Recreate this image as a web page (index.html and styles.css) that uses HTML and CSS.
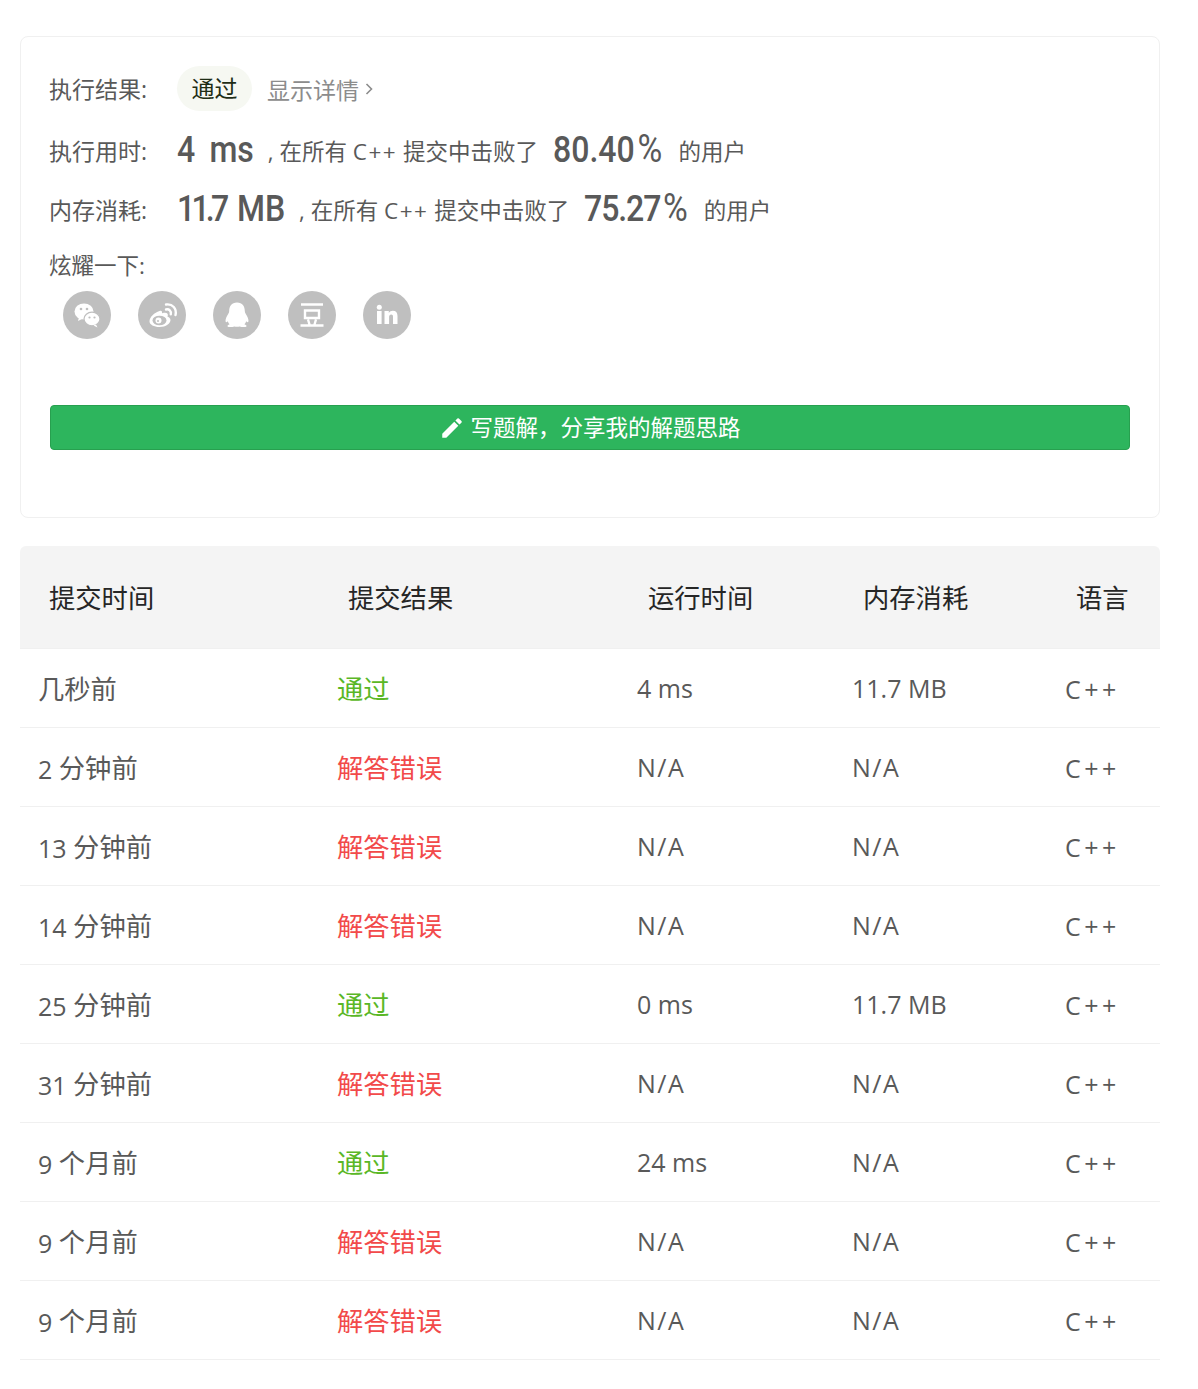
FILE: index.html
```html
<!DOCTYPE html>
<html lang="zh-CN">
<head>
<meta charset="utf-8">
<title>提交结果</title>
<link rel="stylesheet" href="styles.css">
</head>
<body>
<main class="page">
  <section class="card">
    <div class="row row-result">
      <span class="label">执行结果:</span>
      <span class="pill">通过</span>
      <a class="detail">显示详情</a>
      <svg class="chev" width="8" height="12" viewBox="0 0 8 12"><path d="M1.500 1 6.500 6l-5 5" fill="none" stroke="#8c8c8c" stroke-width="1.600"/></svg>
    </div>
    <div class="row row-time">
      <span class="label">执行用时:</span>
      <strong class="big big-ms"><span class="gap">4 ms</span></strong>
      <span class="note">, 在所有 <span class="cpp">C++</span> 提交中击败了</span>
      <strong class="big pct"><span class="num">80.40</span><i>%</i></strong>
      <span class="note">的用户</span>
    </div>
    <div class="row row-mem">
      <span class="label">内存消耗:</span>
      <strong class="big big-mb"><span class="ones">11.7</span> <span class="mb">MB</span></strong>
      <span class="note">, 在所有 <span class="cpp">C++</span> 提交中击败了</span>
      <strong class="big pct"><span class="num">75.27</span><i>%</i></strong>
      <span class="note">的用户</span>
    </div>
    <div class="share-label">炫耀一下:</div>
    <div class="share">
      <span class="circle"><svg width="32" height="32" viewBox="0 0 32 32"><ellipse cx="13" cy="12.500" rx="9.500" ry="8" fill="#fff"/><path d="M8 18l-1 4 5-2.500z" fill="#fff"/><ellipse cx="21" cy="20" rx="8" ry="6.800" fill="#fff" stroke="#bfbfbf" stroke-width="1.200"/><path d="M25 25.500l1.500 3-4-2z" fill="#fff"/><circle cx="10" cy="10" r="1.300" fill="#bfbfbf"/><circle cx="16" cy="10" r="1.300" fill="#bfbfbf"/><circle cx="18.500" cy="18.500" r="1.100" fill="#bfbfbf"/><circle cx="23.500" cy="18.500" r="1.100" fill="#bfbfbf"/></svg></span>
      <span class="circle"><svg width="32" height="32" viewBox="0 0 32 32"><path d="M13.500 12c-5 1.500-10 6-10 10.500 0 3 4.500 5.500 10 5.500 6.500 0 11-3.500 11-7 0-2-2-3-3-3.300 1-2.500 0-4-2.500-4-1.500 0-3 .6-3 .6.500-2-.5-3-2.500-2.300z" fill="#fff"/><ellipse cx="13.500" cy="21.500" rx="7" ry="4.800" fill="#bfbfbf"/><circle cx="12.500" cy="21.500" r="3" fill="#fff"/><circle cx="12" cy="22" r="1" fill="#bfbfbf"/><path d="M20 10.500c3-.8 5.500 1.500 4.800 4.800M20 5.500c6.500-1 11 4 9.500 10.500" fill="none" stroke="#fff" stroke-width="2.400" stroke-linecap="round"/></svg></span>
      <span class="circle"><svg width="32" height="32" viewBox="0 0 32 32"><path d="M16 3.500c-5.500 0-7.800 4-7.800 8.500 0 1-.3 2-1 3-1.500 2.200-2.700 4.500-2.700 7 0 1.500 1 1.500 2.300.2.300 1.300 1 2.300 1.800 3-1.500.6-2.500 1.300-2 2.200.6.900 4.500.9 6.800 0 1.500.3 3.700.3 5.200 0 2.300.9 6.200.9 6.800 0 .5-.9-.5-1.600-2-2.200.8-.7 1.500-1.700 1.800-3 1.300 1.300 2.300 1.300 2.300-.2 0-2.500-1.200-4.800-2.700-7-.7-1-1-2-1-3 0-4.500-2.300-8.500-7.800-8.500z" fill="#fff"/></svg></span>
      <span class="circle"><svg width="32" height="32" viewBox="0 0 32 32"><path d="M5 5.500h22M9 11.500h14v7.500H9zM12 20.500l1.500 5M20 20.500l-1.500 5M4.500 26.500h23" fill="none" stroke="#fff" stroke-width="2.400"/></svg></span>
      <span class="circle"><svg width="32" height="32" viewBox="0 0 32 32"><path d="M6 12h4.600v13H6zM13.500 12h4.300v1.900c.9-1.500 2.300-2.200 4-2.200 3.100 0 4.700 1.900 4.700 5.200V25h-4.500v-7.300c0-1.500-.6-2.300-1.800-2.300-1.300 0-2.100.9-2.100 2.500V25h-4.600z" fill="#fff"/><circle cx="8.300" cy="8.300" r="2.500" fill="#fff"/></svg></span>
    </div>
    <button class="write">
      <svg width="26" height="26" viewBox="0 0 24 24"><path d="M3 17.250V21h3.750L17.810 9.940l-3.750-3.750L3 17.250zM20.710 7.040a1 1 0 0 0 0-1.410l-2.340-2.340a1 1 0 0 0-1.410 0l-1.830 1.830 3.750 3.750 1.830-1.830z" fill="#fff"/></svg>
      <span class="write-text">写题解，分享我的解题思路</span>
    </button>
  </section>

  <table class="subs">
    <colgroup>
      <col class="c1"><col class="c2"><col class="c3"><col class="c4"><col class="c5">
    </colgroup>
    <thead>
      <tr><th>提交时间</th><th>提交结果</th><th>运行时间</th><th>内存消耗</th><th>语言</th></tr>
    </thead>
    <tbody>
      <tr><td class="when"><span class="cjk">几秒前</span></td><td class="ok">通过</td><td>4 ms</td><td>11.7 MB</td><td class="lang">C++</td></tr>
      <tr><td class="when">2 <span class="cjk">分钟前</span></td><td class="bad">解答错误</td><td class="na">N/A</td><td class="na">N/A</td><td class="lang">C++</td></tr>
      <tr><td class="when">13 <span class="cjk">分钟前</span></td><td class="bad">解答错误</td><td class="na">N/A</td><td class="na">N/A</td><td class="lang">C++</td></tr>
      <tr><td class="when">14 <span class="cjk">分钟前</span></td><td class="bad">解答错误</td><td class="na">N/A</td><td class="na">N/A</td><td class="lang">C++</td></tr>
      <tr><td class="when">25 <span class="cjk">分钟前</span></td><td class="ok">通过</td><td>0 ms</td><td>11.7 MB</td><td class="lang">C++</td></tr>
      <tr><td class="when">31 <span class="cjk">分钟前</span></td><td class="bad">解答错误</td><td class="na">N/A</td><td class="na">N/A</td><td class="lang">C++</td></tr>
      <tr><td class="when">9 <span class="cjk">个月前</span></td><td class="ok">通过</td><td>24 ms</td><td class="na">N/A</td><td class="lang">C++</td></tr>
      <tr><td class="when">9 <span class="cjk">个月前</span></td><td class="bad">解答错误</td><td class="na">N/A</td><td class="na">N/A</td><td class="lang">C++</td></tr>
      <tr><td class="when">9 <span class="cjk">个月前</span></td><td class="bad">解答错误</td><td class="na">N/A</td><td class="na">N/A</td><td class="lang">C++</td></tr>
    </tbody>
  </table>
</main>
</body>
</html>
```
FILE: styles.css
```css
* { box-sizing: border-box; }
html, body { margin: 0; padding: 0; background: #fff; }
body {
  font-family: "Open Sans", "Noto Sans CJK SC", sans-serif;
  color: #595959;
  font-size: 16px;
}
.page { width: 1140px; margin: 36px 0 0 20px; }
.card {
  height: 482px;
  border: 1px solid #f0f0f0;
  border-radius: 8px;
  padding: 29px 29px 0 29px;
}
.row { display: flex; align-items: baseline; height: 60px; white-space: nowrap; }
.row-result { height: 46px; align-items: center; margin-bottom: 14px; }
.row-time { padding-top: 1px; }
.row-mem { padding-top: 0; }
.label { width: 128px; margin-left: -1px; flex: none; font-size: 23px; line-height: 46px; }
.pill {
  width: 75px; height: 45px; border-radius: 23px;
  background: #f6f8f2; color: #1f2d16;
  font-size: 23px; text-align: center; line-height: 45px; margin-top: -2px;
}
.detail { margin-left: 15px; font-size: 23px; color: #8c8c8c; }
.chev { margin-left: 6px; }
.big {
  font-family: Roboto, "Noto Sans", sans-serif; font-weight: 500; color: #595959; font-size: 36px;
  transform: scaleX(.89); transform-origin: left center;
}
.big-ms { margin-right: -9.500px; }
.big-mb { margin-right: -13.500px; }
.big > * { vertical-align: -2px; }
.big i { font-style: normal; font-weight: 400; font-size: 38px; margin-left: 3px; }
.gap { word-spacing: 7px; }
.ones { letter-spacing: -4.250px; margin-right: 4px; }
.row-mem .num { letter-spacing: -1.200px; }
.note { font-size: 22.500px; color: #595959; margin-left: 14px; }
.cpp { letter-spacing: 1.500px; }
.pct { margin-left: 15px; margin-right: -13.400px; }
.pct + .note { margin-left: 16px; }
.share-label { font-size: 22.500px; line-height: 30px; margin: 5px 0 0 -1px; }
.share { display: flex; gap: 27px; padding-left: 13px; margin-top: 10px; }
.circle {
  width: 48px; height: 48px; border-radius: 50%;
  background: #bfbfbf;
  display: flex; align-items: center; justify-content: center;
}
.write {
  display: flex; align-items: center; justify-content: center; gap: 5px;
  width: 1080px; height: 45px; margin-top: 66px;
  background: #2db55d; border: 1px solid #27a04f; border-radius: 4px;
  color: #fff; font: inherit; font-size: 22.500px; padding: 0;
}
.write-text { padding-bottom: 2px; }
.subs {
  width: 1140px; margin-top: 28px;
  border-collapse: separate; border-spacing: 0;
  table-layout: fixed;
}
.c1 { width: 299px; } .c2 { width: 300px; } .c3 { width: 215px; } .c4 { width: 213px; } .c5 { width: 113px; }
.subs th {
  height: 103px; background: #f4f4f4; color: #262626;
  font-size: 26.300px; font-weight: 400; text-align: left; padding: 0 0 2px 29px;
  border-bottom: 1px solid #f0f0f0;
}
.subs th:first-child { border-top-left-radius: 6px; }
.subs th:last-child { border-top-right-radius: 6px; }
.subs td {
  height: 79px; padding: 0 0 0 18px;
  font-size: 25px; color: #595959; border-bottom: 1px solid #f0f0f0;
}
.subs td.when { padding-bottom: 2px; }
.cjk { font-size: 26.300px; vertical-align: 1px; }
.subs td.ok { color: #5ab726; font-size: 26.300px; padding-bottom: 2px; }
.subs td.bad { color: #f24a4a; font-size: 26.300px; padding-bottom: 2px; }
.subs td.lang { letter-spacing: 3.500px; padding-top: 2px; }
.subs td.na { letter-spacing: 1.500px; }
```
